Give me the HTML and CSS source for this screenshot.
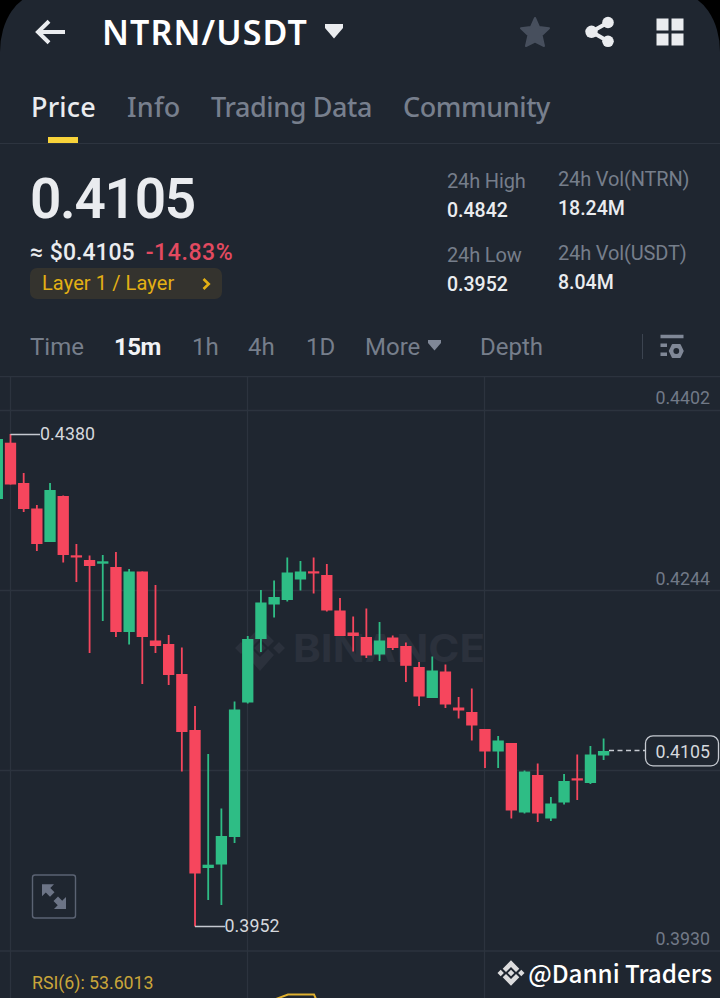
FILE: index.html
```html
<!DOCTYPE html>
<html lang="en">
<head>
    <meta charset="UTF-8">
    <meta name="viewport" content="width=device-width, initial-scale=1.0">
    <title>NTRN/USDT</title>
    <link rel="stylesheet" href="styles.css">
</head>
<body>
    <div class="screen">
        <div class="top-bar">
            <svg class="back" width="32" height="26" viewBox="0 0 32 26">
                <path d="M14 2.3L3 13L14 23.7M3 13H30" fill="none" stroke="#eaecef" stroke-width="4"/>
            </svg>
            <h1>NTRN/USDT</h1>
            <svg class="caret" width="18" height="15" viewBox="0 0 18 15">
                <path d="M0 0H18V4L9 14.5L0 4Z" fill="#eaecef"/>
            </svg>
            <div class="actions">
                <svg width="32" height="32" viewBox="0 0 32 32">
                    <path d="M16 2L20 11L30 12.2L22.6 19.2L25 30L16 25.6L7 30L9.4 19.2L2 12.2L12 11Z" fill="#474f5d" stroke="#474f5d" stroke-width="2" stroke-linejoin="round"/>
                </svg>
                <svg width="32" height="32" viewBox="0 0 32 32">
                    <path d="M24 6.5L7.5 15.8L24 25.3" fill="none" stroke="#eaecef" stroke-width="4"/>
                    <circle cx="24" cy="6.5" r="5.8" fill="#eaecef"/>
                    <circle cx="7.5" cy="15.8" r="6.2" fill="#eaecef"/>
                    <circle cx="24" cy="25.3" r="5.8" fill="#eaecef"/>
                </svg>
                <svg width="28" height="28" viewBox="0 0 28 28" fill="#eaecef">
                    <path d="M0.5 0.5H12.5V12.5H0.5ZM15.5 0.5H27.5V12.5H15.5ZM0.5 15.5H12.5V27.5H0.5ZM15.5 15.5H27.5V27.5H15.5Z"/>
                </svg>
            </div>
        </div>

        <div class="tabs">
            <div class="tab active">Price</div>
            <div class="tab">Info</div>
            <div class="tab">Trading Data</div>
            <div class="tab">Community</div>
        </div>

        <div class="summary">
            <div class="price-box">
                <div class="price">0.4105</div>
                <div class="fiat">≈ <span class="usd">$0.4105</span><span class="change">-14.83%</span></div>
                <div class="tag">
                    <span>Layer 1 / Layer</span>
                    <svg width="9" height="14" viewBox="0 0 9 14">
                        <path d="M1.5 2L6.7 7L1.5 12" fill="none" stroke="#e3b014" stroke-width="2.6"/>
                    </svg>
                </div>
            </div>
            <div class="stats">
                <div class="stat"><div class="label">24h High</div><div class="value">0.4842</div></div>
                <div class="stat"><div class="label">24h Low</div><div class="value">0.3952</div></div>
            </div>
            <div class="stats volume">
                <div class="stat"><div class="label">24h Vol(NTRN)</div><div class="value">18.24M</div></div>
                <div class="stat"><div class="label">24h Vol(USDT)</div><div class="value">8.04M</div></div>
            </div>
        </div>

        <div class="intervals">
            <span>Time</span>
            <span class="active">15m</span>
            <span>1h</span>
            <span>4h</span>
            <span>1D</span>
            <span class="more">More
                <svg width="13" height="11" viewBox="0 0 13 11"><path d="M0 0H13V3L6.5 10.5L0 3Z" fill="#808897"/></svg>
            </span>
            <span>Depth</span>
            <div class="settings">
                <svg width="24" height="25" viewBox="0 0 24 25">
                    <path d="M0.5 2.5H23.5M0.5 11.3H7M0.5 20.3H7" stroke="#808897" stroke-width="3.6"/>
                    <path d="M12.5 10.8H20L23 17L20 23.2H12.5L9.5 17Z" fill="#808897" stroke="#808897" stroke-width="1.5" stroke-linejoin="round"/>
                    <circle cx="16.3" cy="17" r="2.9" fill="#1f2630"/>
                </svg>
            </div>
        </div>

        <div class="chart">
            <svg width="720" height="622" viewBox="0 376 720 622">
                <path class="grid" d="M0 376.5H720M0 410.5H720M0 590.5H720M0 770.5H720M0 951H720M10.5 376V998M247.5 376V998M484.5 376V998"/>

                <g class="watermark">
                    <path d="M246 641L260 627L274 641L268 647L260 639L252 647ZM246 655L252 649L260 657L268 649L274 655L260 671ZM235 648L241 642L247 648L241 654ZM273 648L279 642L285 648L279 654ZM254 648L260 642L266 648L260 654Z"/>
                    <text x="293" y="661.5" textLength="192" lengthAdjust="spacingAndGlyphs">BINANCE</text>
                </g>

                <g id="candles"></g>

                <path class="mark" d="M10.5 434.5H40M195 926.5H225"/>
                <text class="mark-text" x="40" y="440" textLength="55">0.4380</text>
                <text class="mark-text" x="224.5" y="931.5" textLength="55">0.3952</text>

                <text class="axis" x="655.5" y="404" textLength="54.5">0.4402</text>
                <text class="axis" x="655.5" y="584.5" textLength="54.5">0.4244</text>
                <text class="axis" x="655.5" y="945" textLength="54.5">0.3930</text>

                <path class="last-line" d="M609 750.5H645"/>
                <rect class="last-box" x="645.5" y="735.8" width="73" height="30" rx="7.5"/>
                <text class="last-text" x="655.5" y="758" textLength="54.5">0.4105</text>

                <g class="expand">
                    <rect x="32.5" y="875" width="43" height="43" rx="2.5"/>
                    <path d="M42 884.3H54L50.3 888L54.5 892.2L50 896.7L45.8 892.5L42 896.3ZM66 909H54L57.7 905.3L53.5 901.1L58 896.6L62.2 900.8L66 897Z"/>
                </g>

                <text class="rsi" x="32" y="988.5" textLength="121.5">RSI(6): 53.6013</text>
                <path class="rsi-line" d="M276 999L288 994.5H314L316 999"/>
            </svg>

            <div class="credit">
                <svg width="28" height="28" viewBox="0 0 28 28" fill="#dcdcdd">
                    <path d="M5.7 9.8L14 1.2L22.3 9.8L19 13L14 7.9L9 13ZM5.7 18.2L9 15L14 20.1L19 15L22.3 18.2L14 26.8ZM0.5 14L3.7 10.8L6.9 14L3.7 17.2ZM21.1 14L24.3 10.8L27.5 14L24.3 17.2ZM10.7 14L14 10.7L17.3 14L14 17.3Z"/>
                </svg>
                <span>@Danni Traders</span>
            </div>
        </div>
    </div>

    <script src="script.js"></script>
</body>
</html>
```
FILE: styles.css
```css
* {
    margin: 0;
    padding: 0;
    box-sizing: border-box;
}

body {
    width: 720px;
    height: 998px;
    background: #000;
    font-family: Roboto, 'Noto Sans', sans-serif;
    color: #eaecef;
    overflow: hidden;
}

svg {
    display: block;
}

.screen {
    height: 1004px;
    margin-top: -6px;
    padding-top: 6px;
    background: #1f2630;
    border-radius: 40px 40px 0 0 / 58px 58px 0 0;
    overflow: hidden;
}

.top-bar {
    height: 63px;
    padding: 0 36px 0 35px;
    display: flex;
    align-items: center;
}

h1 {
    width: 205px;
    margin-left: 35px;
    font-family: 'Noto Sans', sans-serif;
    font-size: 34px;
    font-weight: 600;
    line-height: 64px;
    letter-spacing: 1.1px;
    color: #fff;
    white-space: nowrap;
}

.caret {
    margin-left: 18px;
}

.actions {
    margin-left: auto;
    display: flex;
    align-items: center;
}

.actions svg + svg {
    margin-left: 33px;
}

.actions svg:last-child {
    margin-left: 40px;
}

.tabs {
    height: 81px;
    padding-left: 31px;
    display: grid;
    grid-template-columns: 96px 84px 192px auto;
    border-bottom: 1px solid #2d343f;
    font-family: 'Noto Sans', sans-serif;
    font-size: 27px;
    font-weight: 500;
    line-height: 88px;
    letter-spacing: -0.4px;
    color: #777f8d;
    white-space: nowrap;
}

.tab:nth-child(-n+2) {
    letter-spacing: 0.2px;
}

.tab.active {
    color: #eaecef;
    background: linear-gradient(#f8d33a, #f8d33a) 17px 74px / 30px 6px no-repeat;
}

.summary {
    height: 174px;
    display: flex;
    padding-left: 30px;
}

.price-box {
    width: 417px;
}

.price {
    margin-top: 25px;
    height: 60px;
    font-size: 55px;
    font-weight: 600;
    line-height: 60px;
    letter-spacing: -1.3px;
}

.fiat {
    height: 39px;
    font-size: 23px;
    font-weight: 500;
    line-height: 47px;
    white-space: nowrap;
}

.usd {
    margin-left: 1px;
}

.change {
    margin-left: 11px;
    color: #e34a60;
    letter-spacing: 0.6px;
}

.tag {
    width: 192px;
    height: 31px;
    padding: 0 11px 0 12px;
    border-radius: 7px;
    background: #34332e;
    color: #e3b014;
    font-size: 20px;
    line-height: 31px;
    letter-spacing: 0.1px;
    display: flex;
    align-items: center;
    justify-content: space-between;
}

.stats {
    width: 111px;
    padding-top: 24px;
    white-space: nowrap;
}

.stats.volume {
    width: 140px;
    padding-top: 22px;
}

.stat {
    height: 74px;
}

.label {
    font-size: 20px;
    line-height: 26px;
    letter-spacing: -0.15px;
    color: #767e8b;
}

.value {
    margin-top: 3px;
    font-size: 19.5px;
    font-weight: 500;
    line-height: 27px;
}

.intervals {
    height: 58px;
    padding-left: 30px;
    display: grid;
    grid-template-columns: 84px 78px 56px 58px 59px 115px 162px auto;
    font-size: 24px;
    line-height: 58px;
    color: #767e8b;
}

.intervals .active {
    color: #f2f3f5;
    font-weight: 700;
    letter-spacing: -0.5px;
}

.more {
    display: flex;
    align-items: center;
    gap: 8px;
}

.more svg {
    margin-top: -4px;
}

.settings {
    height: 25px;
    margin-top: 16px;
    padding-left: 17px;
    border-left: 1px solid #3c4450;
}

.chart {
    position: relative;
    height: 622px;
}

.grid {
    fill: none;
    stroke: #2c333e;
    stroke-width: 1.3;
}

.watermark {
    fill: #2b313c;
    font-family: Inter, sans-serif;
    font-size: 38px;
    font-weight: 700;
}

.up {
    fill: #2ebd85;
}

.down {
    fill: #f6465d;
}

.mark {
    stroke: #c5c9d0;
    stroke-width: 1.3;
}

.mark-text,
.last-text,
.axis,
.rsi {
    font-size: 17.8px;
    fill: #d5d8dd;
}

.axis {
    fill: #717987;
}

.last-line {
    stroke: #c5c9d0;
    stroke-width: 1.3;
    stroke-dasharray: 5 3.5;
}

.last-box {
    fill: #1f2630;
    stroke: #c5c9d0;
    stroke-width: 1.3;
}

.expand rect {
    fill: none;
    stroke: #5b6373;
    stroke-width: 1.4;
}

.expand path {
    fill: #6c7486;
}

.rsi {
    fill: #c9a53a;
}

.rsi-line {
    fill: none;
    stroke: #e0b02f;
    stroke-width: 2;
}

/* Author handle sits over the chart corner */
.credit {
    position: absolute;
    right: 8px;
    bottom: 9px;
    display: flex;
    align-items: center;
    gap: 3px;
    height: 32px;
    color: #fff;
    font-family: 'Noto Sans CJK SC', sans-serif;
    font-size: 24.2px;
    font-weight: 500;
    line-height: 32px;
    white-space: nowrap;
}
```
FILE: script.js
```javascript
const SVG_NS = 'http://www.w3.org/2000/svg';
const STEP = 13.18;
const BODY_WIDTH = 11.3;

// direction, high, body top, body bottom, low
const candles = [
    ['up', 439, 439, 499, 499],
    ['down', 434, 442.7, 484.5, 484.5],
    ['down', 473, 483, 509, 512],
    ['down', 505, 508.5, 544, 551],
    ['up', 483, 490, 542, 542],
    ['down', 495.5, 496, 555, 562.5],
    ['down', 544, 555.3, 557.5, 582],
    ['down', 555.5, 560, 566, 653],
    ['up', 555, 561.3, 563.7, 621],
    ['down', 552, 567, 632, 637],
    ['up', 569, 571.5, 632, 644.5],
    ['down', 571.5, 571.5, 637, 684],
    ['down', 585, 640.5, 646, 653],
    ['down', 635, 644, 675, 685],
    ['down', 647.5, 674, 732, 771.5],
    ['down', 706, 730, 873.5, 926.5],
    ['up', 754, 864.7, 868, 900],
    ['up', 808.5, 836, 864.5, 905],
    ['up', 701.5, 709.5, 837, 843],
    ['up', 636, 639, 702.5, 703.5],
    ['up', 590, 602.5, 639, 652],
    ['up', 580.5, 597, 604.5, 617.5],
    ['up', 557.5, 572.5, 600, 601.5],
    ['up', 561, 571.5, 579.5, 590.5],
    ['down', 557.5, 571.3, 573.5, 593.5],
    ['down', 564, 575, 610.5, 611.5],
    ['down', 598, 610.5, 636, 636],
    ['down', 616.5, 632.5, 636, 651.5],
    ['down', 608.5, 637, 655.5, 658],
    ['up', 622, 640.5, 654.5, 661],
    ['down', 635.5, 637.5, 648, 650],
    ['down', 642.5, 646, 665.8, 682],
    ['down', 662, 667, 696.5, 706],
    ['up', 656.5, 670.5, 698, 698],
    ['down', 664.5, 671.5, 704.5, 708],
    ['down', 697, 707.5, 710.5, 718.5],
    ['down', 688.5, 712, 725.5, 740.5],
    ['down', 729, 729, 751.5, 768],
    ['up', 736, 740.5, 751.5, 768],
    ['down', 743, 743, 810.5, 818.5],
    ['up', 770.5, 771.5, 812.5, 813.5],
    ['down', 763.5, 775, 813.5, 822],
    ['up', 797, 803.5, 818.5, 821],
    ['up', 774, 781, 802.5, 804.5],
    ['down', 754.5, 778.3, 780.5, 800],
    ['up', 746, 754.5, 783, 784],
    ['up', 738.5, 751, 755.5, 760]
];

function addRect(type, x, y, width, height) {
    const rect = document.createElementNS(SVG_NS, 'rect');
    rect.setAttribute('class', type);
    rect.setAttribute('x', x);
    rect.setAttribute('y', y);
    rect.setAttribute('width', width);
    rect.setAttribute('height', height);
    document.getElementById('candles').appendChild(rect);
}

candles.forEach(([type, high, top, bottom, low], i) => {
    const center = 10.5 + (i - 1) * STEP;
    addRect(type, center - 0.9, high, 1.8, low - high);
    addRect(type, center - BODY_WIDTH / 2, top, BODY_WIDTH, bottom - top);
});
```
